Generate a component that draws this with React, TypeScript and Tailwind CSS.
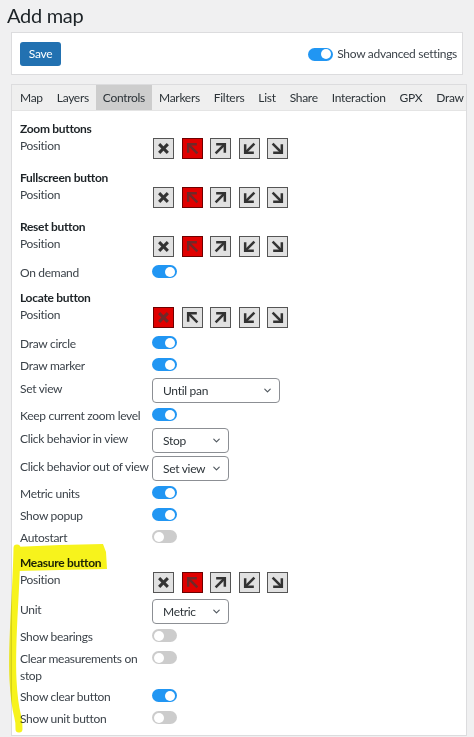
import React from "react";

type Row =
  | { kind: "heading"; text: string }
  | { kind: "position"; active: number }
  | { kind: "toggle"; label: React.ReactNode; on: boolean; tall?: boolean }
  | { kind: "select"; label: string; value: string; wide?: boolean };

const rows: Row[] = [
  { kind: "heading", text: "Zoom buttons" },
  { kind: "position", active: 1 },
  { kind: "heading", text: "Fullscreen button" },
  { kind: "position", active: 1 },
  { kind: "heading", text: "Reset button" },
  { kind: "position", active: 1 },
  { kind: "toggle", label: "On demand", on: true },
  { kind: "heading", text: "Locate button" },
  { kind: "position", active: 0 },
  { kind: "toggle", label: "Draw circle", on: true },
  { kind: "toggle", label: "Draw marker", on: true },
  { kind: "select", label: "Set view", value: "Until pan", wide: true },
  { kind: "toggle", label: "Keep current zoom level", on: true },
  { kind: "select", label: "Click behavior in view", value: "Stop" },
  { kind: "select", label: "Click behavior out of view", value: "Set view" },
  { kind: "toggle", label: "Metric units", on: true },
  { kind: "toggle", label: "Show popup", on: true },
  { kind: "toggle", label: "Autostart", on: false },
  { kind: "heading", text: "Measure button" },
  { kind: "position", active: 1 },
  { kind: "select", label: "Unit", value: "Metric" },
  { kind: "toggle", label: "Show bearings", on: false },
  {
    kind: "toggle",
    label: (
      <>
        Clear measurements on
        <br />
        stop
      </>
    ),
    on: false,
    tall: true,
  },
  { kind: "toggle", label: "Show clear button", on: true },
  { kind: "toggle", label: "Show unit button", on: false },
];

const tabs = ["Map", "Layers", "Controls", "Markers", "Filters", "List", "Share", "Interaction", "GPX", "Draw"];

function Toggle({ on }: { on: boolean }) {
  return (
    <span
      className={`flex items-center w-[25px] h-[13px] rounded-full px-[2px] ${
        on ? "bg-[#2196f3] justify-end" : "bg-[#cccccc] justify-start"
      }`}
    >
      <span className="w-[10px] h-[10px] rounded-full bg-white" />
    </span>
  );
}

function PosIcon({ i }: { i: number }) {
  const paths: Record<number, string[]> = {
    0: ["M8 8l8 8", "M16 8l-8 8"],
    1: ["M8 16V8h8", "M16.5 16.5L8 8"],
    2: ["M8 8h8v8", "M7.5 16.5L16 8"],
    3: ["M16 16H8V8", "M16.5 7.5L8 16"],
    4: ["M16 8v8H8", "M7.5 7.5L16 16"],
  };
  return (
    <svg width="13" height="13" viewBox="6 6 12 12" fill="none" stroke="currentColor" strokeWidth={i === 0 ? 2.8 : 2.3} strokeLinecap="butt">
      {paths[i].map((d) => (
        <path key={d} d={d} />
      ))}
    </svg>
  );
}

function Position({ active }: { active: number }) {
  return (
    <div className="flex gap-[7.5px] ml-[1px]">
      {[0, 1, 2, 3, 4].map((i) => (
        <span
          key={i}
          className={`flex items-center justify-center w-[21px] h-[21px] border ${
            i === active
              ? "bg-[#e00000] border-[#6e0000] text-[#702828]"
              : "bg-[#e1e1e1] border-[#555555] text-[#333333]"
          }`}
        >
          <PosIcon i={i} />
        </span>
      ))}
    </div>
  );
}

function Select({ value, wide }: { value: string; wide?: boolean }) {
  return (
    <div
      className={`flex items-center justify-between h-[25px] rounded-[4px] border border-[#8c8f94] bg-white pl-[10px] pr-[6px] text-[#2c3338] whitespace-nowrap ${
        wide ? "w-[128px]" : "w-[77px]"
      }`}
    >
      <span>{value}</span>
      <svg width="11" height="11" viewBox="0 0 24 24" fill="none" stroke="#50575e" strokeWidth="2.5" strokeLinecap="round" strokeLinejoin="round">
        <path d="M6 9l6 6 6-6" />
      </svg>
    </div>
  );
}

export default function App() {
  return (
    <div
      className="relative w-[474px] h-[737px] overflow-hidden bg-[#f0f0f1] text-[12px] tracking-[-0.3px] text-[#3c434a]"
      style={{ fontFamily: "Lato, 'Liberation Sans', sans-serif" }}
    >
      {/* Title */}
      <h1 className="pl-[7px] pt-[2px] h-[32px] text-[20px] leading-[26px] text-[#1d2327]">Add map</h1>

      {/* Save bar */}
      <div className="ml-[11px] w-[452px] h-[43px] bg-white border border-[#dcdcde] flex items-center justify-between pl-[8px] pr-[5px]">
        <button className="h-[24px] w-[41px] rounded-[3px] bg-[#2271b1] text-white">Save</button>
        <label className="flex items-center gap-[4px] pt-[1px]">
          <Toggle on />
          Show advanced settings
        </label>
      </div>

      {/* Tab panel */}
      <div className="mt-[9px] ml-[11px] w-[456px] h-[652px] bg-white border border-[#dcdcde]">
        <div className="flex h-[26px] bg-[#efefef] pl-[1px] border-b border-[#e4e4e4]">
          {tabs.map((t) => (
            <span
              key={t}
              className={`flex items-center px-[7px] text-[#2c3338] ${t === "Controls" ? "bg-[#cdcdcd]" : ""}`}
            >
              {t}
            </span>
          ))}
        </div>

        <div className="pl-[8px] pt-[10px]">
          {rows.map((r, idx) => {
            if (r.kind === "heading")
              return (
                <div key={idx} className={`${idx === 0 ? "h-[16px]" : "pt-[6px] h-[22px]"} font-bold leading-[16px] text-[#1d2327]`}>
                  {r.text}
                </div>
              );
            if (r.kind === "position")
              return (
                <div key={idx} className="flex h-[27px] pt-[1px]">
                  <div className="w-[132px] leading-[16px]">Position</div>
                  <Position active={r.active} />
                </div>
              );
            if (r.kind === "select")
              return (
                <div key={idx} className="flex h-[28px] pt-[1px]">
                  <div className="w-[132px] leading-[17px] pt-[2px] whitespace-nowrap">{r.label}</div>
                  <Select value={r.value} wide={r.wide} />
                </div>
              );
            return (
              <div key={idx} className={`flex ${r.tall ? "h-[38px]" : "h-[22px]"}`}>
                <div className="w-[132px] leading-[17px] pt-[2px] whitespace-nowrap">{r.label}</div>
                <div className="pt-[3px]">
                  <Toggle on={r.on} />
                </div>
              </div>
            );
          })}
        </div>
      </div>

      {/* Highlighter annotation */}
      <svg className="absolute inset-0 pointer-events-none mix-blend-multiply" width="474" height="737" viewBox="0 0 474 737">
        <path d="M14 547 L60 545 L103 544 L106 552 L107 569 L60 570 L17 571 Z" fill="#f7f31c" />
        <path d="M17 548 C 16 600, 11 640, 13 680 S 20 715, 19 729" stroke="#f7f31c" strokeWidth="7" fill="none" strokeLinecap="round" />
      </svg>
    </div>
  );
}
